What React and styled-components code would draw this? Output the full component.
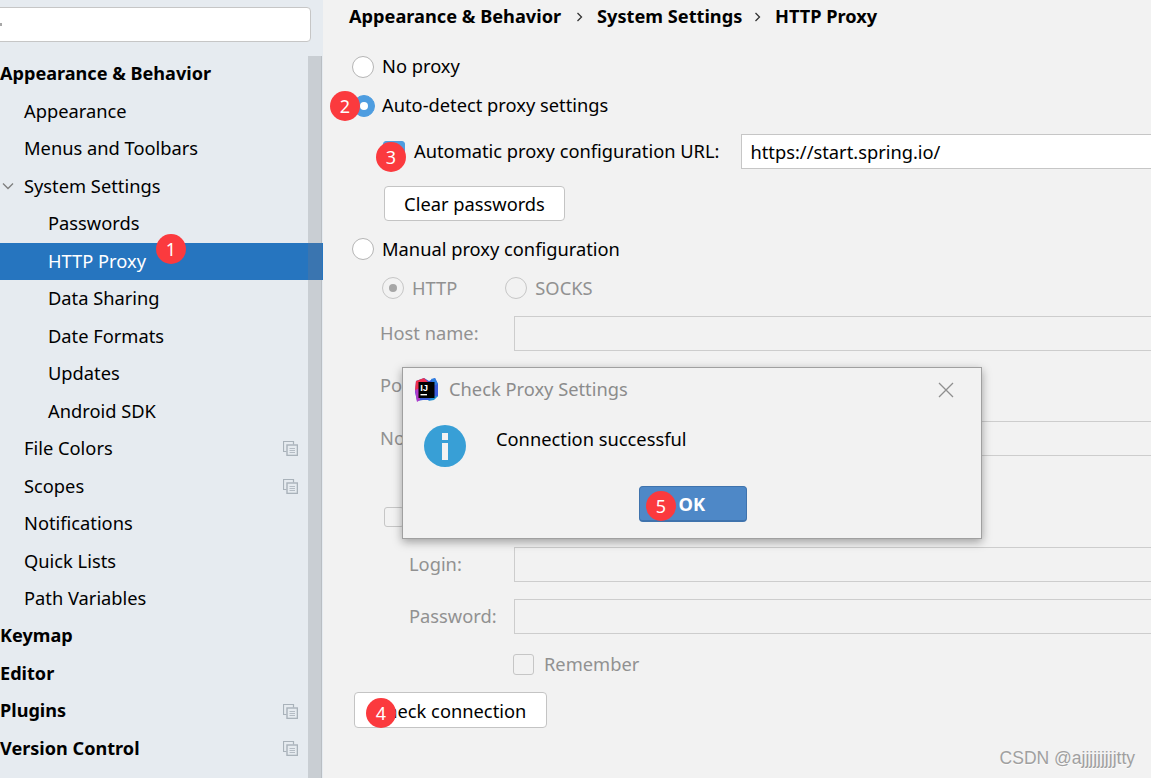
import React from 'react'
import styled, { createGlobalStyle } from 'styled-components'

const FONT = `"Noto Sans", "Open Sans", Arial, sans-serif`

const GlobalStyle = createGlobalStyle`
  html, body { margin: 0; padding: 0; background: #f2f2f2; }
  * { box-sizing: border-box; }
  body { font-family: ${FONT}; }
`

const Page = styled.div`
  position: relative;
  display: grid;
  grid-template-columns: 323px 1fr;
  width: 1151px;
  height: 778px;
  overflow: hidden;
  font-size: 18.3px;
  color: #000;
`

/* ---- left tree ---- */
const Sidebar = styled.aside`
  position: relative;
  background: #e6ebf0;
  padding-top: 7px;
`
const SearchBox = styled.div`
  display: flex;
  align-items: center;
  width: 319px;
  height: 35px;
  margin: 0 0 13px -8px;
  padding-left: 7px;
  background: #fff;
  border: 1px solid #c6c6c6;
  border-radius: 4px;
`
const SearchIconTip = styled.span`
  width: 2px;
  height: 3px;
  background: #a8a8a8;
`
const Tree = styled.div`
  display: flex;
  flex-direction: column;
`
const TreeRow = styled.div`
  position: relative;
  z-index: ${(p) => (p.$selected ? 2 : 0)};
  display: flex;
  align-items: center;
  justify-content: space-between;
  height: 37.5px;
  padding: 0 25px 0 ${(p) => [0, 24, 48][p.$level]}px;
  font-weight: ${(p) => (p.$level === 0 ? 700 : 400)};
  font-size: ${(p) => (p.$level === 0 ? 18.1 : 18.3)}px;
  background: ${(p) => (p.$selected ? '#2675bf' : 'transparent')};
  color: ${(p) => (p.$selected ? '#fff' : '#000')};
  white-space: nowrap;
`
const Label = styled.span`
  margin-bottom: 2px;
`
const Caret = styled.svg`
  position: absolute;
  left: 2px;
  top: 14px;
`
const Scrollbar = styled.div`
  position: absolute;
  top: 56px;
  bottom: 0;
  left: 308px;
  width: 14px;
  background: #c9ced3;
  border-right: 1px solid #b9bec3;
  z-index: 1;
`
const SelectedTint = styled.div`
  position: absolute;
  top: 0;
  bottom: 0;
  left: 308px;
  width: 14px;
  background: #3a75b0;
`

/* ---- right form ---- */
const Main = styled.main`
  padding-left: 26px;
`
const Breadcrumb = styled.div`
  display: flex;
  align-items: center;
  height: 33px;
  font-weight: 700;
  font-size: 18.2px;
  white-space: nowrap;
`
const Crumb = styled.span`
  width: ${(p) => p.$width}px;
  margin-bottom: 2px;
`
const CrumbArrow = styled.svg`
  flex: none;
  width: 25px;
`
const Row = styled.div`
  display: flex;
  align-items: center;
  height: ${(p) => p.$height || 39}px;
  margin-top: ${(p) => p.$top || 0}px;
  margin-left: ${(p) => p.$left || 0}px;
  color: ${(p) => (p.$muted ? '#919191' : '#000')};
  white-space: nowrap;
`
const Radio = styled.span`
  flex: none;
  position: relative;
  width: 22px;
  height: 22px;
  margin-left: ${(p) => p.$before || 0}px;
  margin-right: ${(p) => p.$gap || 8}px;
  border-radius: 50%;
  background: ${(p) => (p.$on ? '#4e9de0' : '#fff')};
  border: 1px solid ${(p) => (p.$on ? '#4e9de0' : '#b5b5b5')};
  ${(p) => p.$muted && 'background: #f2f2f2; border-color: #c6c6c6;'}

  &::after {
    content: '';
    display: ${(p) => (p.$on || p.$dot ? 'block' : 'none')};
    position: absolute;
    inset: 6px;
    border-radius: 50%;
    background: ${(p) => (p.$dot ? '#a6a6a6' : '#fff')};
  }
`
const CheckBox = styled.span`
  flex: none;
  width: ${(p) => p.$size || 21}px;
  height: ${(p) => p.$size || 21}px;
  margin-right: ${(p) => p.$gap || 10}px;
  border-radius: 3px;
  background: ${(p) => (p.$on ? '#4e9de0' : '#f2f2f2')};
  border: 1px solid ${(p) => (p.$on ? '#4e9de0' : '#c6c6c6')};
`
const Button = styled.div`
  display: flex;
  align-items: center;
  justify-content: center;
  width: ${(p) => p.$width}px;
  height: ${(p) => p.$height}px;
  margin-top: ${(p) => p.$top}px;
  margin-left: ${(p) => p.$left}px;
  background: #fff;
  border: 1px solid #c4c4c4;
  border-radius: 4px;
  white-space: nowrap;
`
const UrlInput = styled.div`
  flex: 1;
  display: flex;
  align-items: center;
  height: 35px;
  margin: 0 -20px 0 22px;
  padding-left: 8px;
  background: #fff;
  border: 1px solid #c6c6c6;
`
const FieldRow = styled.div`
  display: flex;
  align-items: center;
  height: 35px;
  margin-top: ${(p) => p.$top}px;
  margin-left: ${(p) => p.$left}px;
  color: #919191;
  white-space: nowrap;
`
const FieldLabel = styled.span`
  flex: none;
  width: ${(p) => p.$width}px;
  margin-bottom: 2px;
`
const FieldInput = styled.div`
  flex: ${(p) => (p.$width ? 'none' : 1)};
  width: ${(p) => p.$width || 0}px;
  height: 35px;
  margin-right: ${(p) => (p.$width ? 0 : -20)}px;
  border: 1px solid #cdcdcd;
`

/* ---- dialog ---- */
const Dialog = styled.section`
  position: absolute;
  left: 402px;
  top: 367px;
  width: 580px;
  height: 172px;
  z-index: 3;
  display: flex;
  flex-direction: column;
  background: #f2f2f2;
  border: 1px solid #a0a0a0;
  box-shadow: 0 3px 9px rgba(0, 0, 0, 0.35);
`
const TitleBar = styled.header`
  display: flex;
  align-items: center;
  height: 43px;
  padding: 0 27px 0 11px;
  color: #8c8c8c;
`
const TitleText = styled.span`
  flex: 1;
  margin: 0 0 2px 10px;
`
const DialogBody = styled.div`
  display: flex;
  align-items: flex-start;
  height: 75px;
  padding: 14px 0 0 21px;
`
const Message = styled.span`
  margin: 1px 0 0 30px;
  line-height: 26px;
`
const DialogFooter = styled.footer`
  display: flex;
  justify-content: center;
  padding-left: 1px;
`
const OkButton = styled.div`
  display: flex;
  align-items: center;
  width: 108px;
  height: 36px;
  padding-left: 39px;
  background: #4e88c7;
  border: 1px solid #3f73ad;
  border-bottom-width: 2px;
  border-radius: 4px;
  color: #fff;
  font-weight: 700;
`

/* ---- annotations ---- */
const Badge = styled.span`
  position: absolute;
  left: ${(p) => p.$x - 15}px;
  top: ${(p) => p.$y - 15}px;
  z-index: 4;
  display: flex;
  align-items: center;
  justify-content: center;
  width: 30px;
  height: 30px;
  border-radius: 50%;
  background: #fb3a3e;
  color: #fff;
  font-size: 18px;
`
const Watermark = styled.span`
  position: absolute;
  right: 16px;
  bottom: 9px;
  color: #a0a0a0;
  font-family: "Liberation Sans", Arial, sans-serif;
  font-size: 17.5px;
  text-shadow: 0 1px 0 #fbfbfb;
`

const CopyIcon = () => (
  <svg width="15" height="15" viewBox="0 0 15 15" fill="none">
    <path d="M10.5 3.5V.5H.5v10h3" stroke="#a9b2ba" strokeWidth="1.2" />
    <rect x="4" y="4" width="10.4" height="10.4" fill="#e6ebf0" stroke="#a9b2ba" strokeWidth="1.4" />
    <path d="M6.5 7.5h5.5M6.5 9.5h5.5M6.5 11.5h5.5" stroke="#b4bcc4" strokeWidth="1" />
  </svg>
)

const Arrow = () => (
  <CrumbArrow height="12" viewBox="0 0 25 12" fill="none">
    <path d="M5.5 2l4 4-4 4" stroke="#333" strokeWidth="1.3" />
  </CrumbArrow>
)

const AppLogo = () => (
  <svg width="25" height="25" viewBox="0 0 25 25">
    <path d="M2 4l8-3 5 3 6-3 3 6v12l-5 4H9l-6 1-2-9z" fill="#3b5bdb" />
    <path d="M2 4l8-3 4 4-8 8-5 0z" fill="#f0304f" />
    <path d="M1 13l5-2v12l-3 2z" fill="#b43bc9" />
    <path d="M17 2l4-1 3 6-5 2z" fill="#2f7fe0" />
    <path d="M19 19l5 0-4 4-6 1z" fill="#1f8ecf" />
    <rect x="4.5" y="5" width="16" height="16" fill="#000" />
    <text x="6.2" y="14.4" fontFamily="'Liberation Sans', sans-serif" fontWeight="700" fontSize="9.5" fill="#fff">IJ</text>
    <rect x="6.5" y="17" width="6.5" height="1.4" fill="#fff" />
  </svg>
)

const InfoIcon = () => (
  <svg width="42" height="42" viewBox="0 0 42 42">
    <circle cx="21" cy="21" r="21" fill="#389fd6" />
    <rect x="18" y="8" width="6" height="7" fill="#f2f2f2" />
    <rect x="18" y="18" width="6" height="17" fill="#f2f2f2" />
  </svg>
)

const CloseIcon = () => (
  <svg width="16" height="16" viewBox="0 0 16 16" fill="none">
    <path d="M1 1l14 14M15 1L1 15" stroke="#8f8f8f" strokeWidth="1.3" />
  </svg>
)

const treeItems = [
  { label: 'Appearance & Behavior', level: 0 },
  { label: 'Appearance', level: 1 },
  { label: 'Menus and Toolbars', level: 1 },
  { label: 'System Settings', level: 1, open: true },
  { label: 'Passwords', level: 2 },
  { label: 'HTTP Proxy', level: 2, selected: true },
  { label: 'Data Sharing', level: 2 },
  { label: 'Date Formats', level: 2 },
  { label: 'Updates', level: 2 },
  { label: 'Android SDK', level: 2 },
  { label: 'File Colors', level: 1, shared: true },
  { label: 'Scopes', level: 1, shared: true },
  { label: 'Notifications', level: 1 },
  { label: 'Quick Lists', level: 1 },
  { label: 'Path Variables', level: 1 },
  { label: 'Keymap', level: 0 },
  { label: 'Editor', level: 0 },
  { label: 'Plugins', level: 0, shared: true },
  { label: 'Version Control', level: 0, shared: true },
]

const badges = [
  { n: 1, x: 171, y: 249 },
  { n: 2, x: 345, y: 106 },
  { n: 3, x: 391, y: 157 },
  { n: 4, x: 381, y: 713 },
  { n: 5, x: 661, y: 506 },
]

export default function App() {
  return (
    <Page>
      <GlobalStyle />
      <Sidebar>
        <SearchBox>
          <SearchIconTip />
        </SearchBox>
        <Tree>
          {treeItems.map((item) => (
            <TreeRow key={item.label} $level={item.level} $selected={item.selected}>
              {item.open && (
                <Caret width="12" height="9" viewBox="0 0 12 9" fill="none">
                  <path d="M1 1.5l5 5 5-5" stroke="#808080" strokeWidth="1.4" />
                </Caret>
              )}
              <Label>{item.label}</Label>
              {item.selected && <SelectedTint />}
              {item.shared && <CopyIcon />}
            </TreeRow>
          ))}
        </Tree>
        <Scrollbar />
      </Sidebar>

      <Main>
        <Breadcrumb>
          <Crumb $width={223}>Appearance &amp; Behavior</Crumb>
          <Arrow />
          <Crumb $width={153}>System Settings</Crumb>
          <Arrow />
          <Crumb>HTTP Proxy</Crumb>
        </Breadcrumb>

        <Row $top={14} $left={3}>
          <Radio />
          <Label>No proxy</Label>
        </Row>
        <Row $left={4}>
          <Radio $on $gap={7} />
          <Label>Auto-detect proxy settings</Label>
        </Row>
        <Row $height={35} $top={9} $left={34}>
          <CheckBox $on $size={22} $gap={9} />
          <Label>Automatic proxy configuration URL:</Label>
          <UrlInput>https://start.spring.io/</UrlInput>
        </Row>
        <Button $width={181} $height={35} $top={17} $left={35}>Clear passwords</Button>
        <Row $height={38} $top={9} $left={3}>
          <Radio />
          <Label>Manual proxy configuration</Label>
        </Row>
        <Row $height={38} $top={1} $left={33} $muted>
          <Radio $muted $dot />
          <Label>HTTP</Label>
          <Radio $muted $before={48} />
          <Label>SOCKS</Label>
        </Row>

        <FieldRow $top={9} $left={31}>
          <FieldLabel $width={134}>Host name:</FieldLabel>
          <FieldInput />
        </FieldRow>
        <FieldRow $top={17} $left={31}>
          <FieldLabel $width={134}>Port number:</FieldLabel>
          <FieldInput $width={200} />
        </FieldRow>
        <FieldRow $top={18} $left={31}>
          <FieldLabel $width={134}>No proxy for:</FieldLabel>
          <FieldInput />
        </FieldRow>
        <Row $height={20} $top={51} $left={35} $muted>
          <CheckBox $size={20} />
          <Label>Proxy authentication</Label>
        </Row>
        <FieldRow $top={20} $left={60}>
          <FieldLabel $width={105}>Login:</FieldLabel>
          <FieldInput />
        </FieldRow>
        <FieldRow $top={17} $left={60}>
          <FieldLabel $width={105}>Password:</FieldLabel>
          <FieldInput />
        </FieldRow>
        <Row $height={22} $top={19} $left={164} $muted>
          <CheckBox />
          <Label>Remember</Label>
        </Row>
        <Button $width={193} $height={36} $top={17} $left={5}>Check connection</Button>
      </Main>

      <Dialog>
        <TitleBar>
          <AppLogo />
          <TitleText>Check Proxy Settings</TitleText>
          <CloseIcon />
        </TitleBar>
        <DialogBody>
          <InfoIcon />
          <Message>Connection successful</Message>
        </DialogBody>
        <DialogFooter>
          <OkButton>OK</OkButton>
        </DialogFooter>
      </Dialog>

      {badges.map((b) => (
        <Badge key={b.n} $x={b.x} $y={b.y}>{b.n}</Badge>
      ))}
      <Watermark>CSDN @ajjjjjjjjjtty</Watermark>
    </Page>
  )
}
